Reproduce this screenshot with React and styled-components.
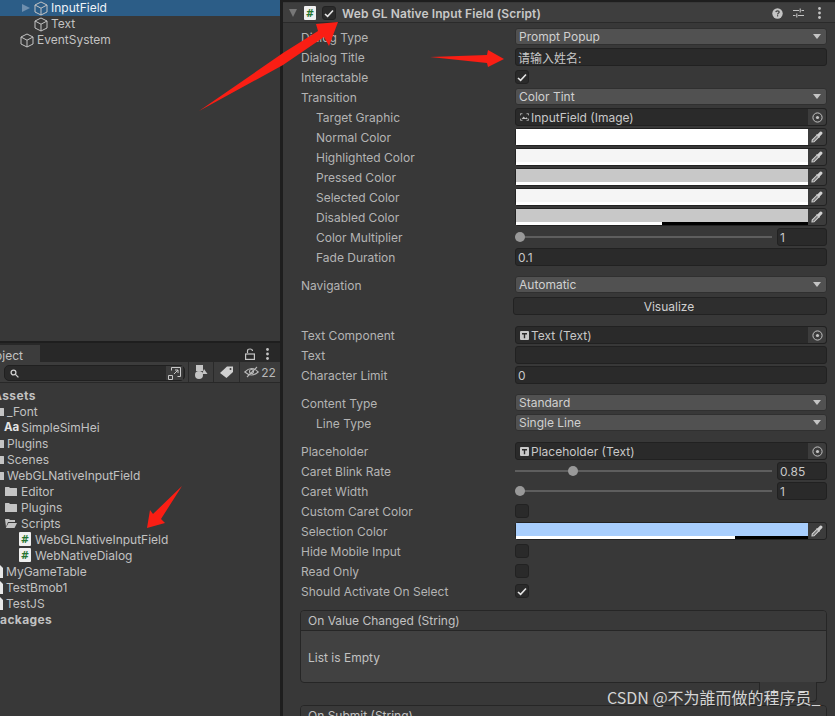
import React from 'react'
import styled, { createGlobalStyle } from 'styled-components'

const GlobalStyle = createGlobalStyle`
    html, body {
        margin: 0;
        padding: 0;
        background: #383838;
    }
    * {
        box-sizing: border-box;
    }
`

const Page = styled.div`
    position: relative;
    display: flex;
    width: 835px;
    height: 716px;
    overflow: hidden;
    background: #383838;
    color: #c2c2c2;
    font-family: Inter, "Noto Sans CJK SC", sans-serif;
    font-size: 12px;
`

const LeftColumn = styled.div`
    display: flex;
    flex-direction: column;
    flex: 0 0 280px;
    overflow: hidden;
`

const Hierarchy = styled.div`
    flex: 0 0 343px;
    border-bottom: 2px solid #1e1e1e;
`

const HierarchyRow = styled.div`
    display: flex;
    align-items: center;
    height: 16px;
    padding-left: ${(props) => props.$indent}px;
    background: ${(props) => (props.$selected ? '#2c5d87' : 'transparent')};
    color: ${(props) => (props.$selected ? '#eef3f7' : '#c2c2c2')};
`

const Caret = styled.span`
    width: 0;
    height: 0;
    margin-right: 4px;
    border-top: 4px solid transparent;
    border-bottom: 4px solid transparent;
    border-left: 8px solid #6f8fae;
`

const RowLabel = styled.span`
    margin-left: 3px;
    line-height: 16px;
    white-space: nowrap;
`

const Project = styled.div`
    flex: 1;
    display: flex;
    flex-direction: column;
    min-height: 0;
`

const TabBar = styled.div`
    display: flex;
    align-items: flex-end;
    justify-content: space-between;
    height: 19px;
    background: #282828;
`

const Tab = styled.div`
    display: flex;
    justify-content: flex-end;
    align-items: center;
    width: 40px;
    height: 17px;
    padding: 3px 17px 0 0;
    background: #3c3c3c;
    white-space: nowrap;
    overflow: hidden;
`

const TabIcons = styled.div`
    display: flex;
    align-items: center;
    gap: 11px;
    height: 17px;
    padding-right: 11px;
`

const Toolbar = styled.div`
    display: flex;
    align-items: stretch;
    height: 21px;
    background: #3c3c3c;
    border-bottom: 1px solid #282828;
`

const SearchBox = styled.div`
    display: flex;
    align-items: center;
    justify-content: space-between;
    width: 181px;
    height: 16px;
    margin: 3px 3px 0 4px;
    padding: 0 1px 0 5px;
    background: #2a2a2a;
    border: 1px solid #202020;
    border-radius: 5px;
`

const SearchButton = styled.div`
    display: flex;
    align-items: center;
    justify-content: center;
    width: 17px;
    height: 14px;
    background: #3c3c3c;
`

const ToolButton = styled.div`
    display: flex;
    align-items: center;
    justify-content: center;
    gap: 2px;
    width: ${(props) => props.$width}px;
    border-left: 1px solid #2a2a2a;
    color: #b8b8b8;
    font-size: 12px;
`

const Tree = styled.div`
    padding-top: 4px;
`

const TreeRow = styled.div`
    display: flex;
    align-items: center;
    gap: ${(props) => props.$gap || 3}px;
    height: 16px;
    margin-left: ${(props) => props.$indent}px;
    white-space: nowrap;
`

const TreeTitle = styled(TreeRow)`
    font-weight: 700;
    letter-spacing: 0.4px;
`

const FontMark = styled.b`
    color: #e4e4e4;
    font-size: 11.5px;
`

const ScriptBadge = styled.span`
    display: flex;
    align-items: center;
    justify-content: center;
    flex: 0 0 ${(props) => props.$size}px;
    height: ${(props) => props.$size + 2}px;
    background: #f0f0f0;
    border-radius: 1px;
    color: #24742f;
    font-family: "DejaVu Sans", sans-serif;
    font-size: ${(props) => props.$size - 2}px;
    font-weight: 700;
`

const Divider = styled.div`
    flex: 0 0 3px;
    background: #1e1e1e;
`

const Inspector = styled.div`
    flex: 1;
    min-width: 0;
    padding-top: 2px;
    border-top: 2px solid #1e1e1e;
`

const InspectorHeader = styled.div`
    display: flex;
    align-items: center;
    height: 20px;
    margin-top: -1px;
    padding: 1px 0 0 6px;
    background: #3e3e3e;
    border-bottom: 1px solid #2a2a2a;
`

const HeaderCaret = styled.span`
    width: 0;
    height: 0;
    margin-right: 7px;
    border-left: 4px solid transparent;
    border-right: 4px solid transparent;
    border-top: 8px solid #777;
`

const HeaderCheck = styled.div`
    display: flex;
    align-items: center;
    justify-content: center;
    width: 14px;
    height: 14px;
    margin-left: 6px;
    background: #2a2a2a;
    border: 1px solid #222;
    border-radius: 3px;
`

const Title = styled.div`
    flex: 1;
    margin-left: 6px;
    color: #c8c8c8;
    font-weight: 600;
    letter-spacing: 0.1px;
    white-space: nowrap;
`

const HeaderIcons = styled.div`
    display: flex;
    align-items: center;
    gap: 10px;
    padding-right: 14px;

    svg:last-child {
        margin-left: 4px;
    }
`

const Fields = styled.div`
    padding: 4px 8px 0 18px;
`

const Row = styled.div`
    display: flex;
    align-items: center;
    height: 20px;
    margin-top: ${(props) => props.$gap || 0}px;
`

const Label = styled.div`
    flex: 0 0 214px;
    padding-left: ${(props) => (props.$nested ? 15 : 0)}px;
    color: #b4b4b4;
    white-space: nowrap;
`

const Value = styled.div`
    flex: 1;
    display: flex;
    align-items: center;
    gap: 5px;
    min-width: 0;
`

const Dropdown = styled.div`
    flex: 1;
    display: flex;
    align-items: center;
    justify-content: space-between;
    height: 17px;
    margin-top: -1px;
    padding: 0 5px 0 3px;
    background: #515151;
    border: 1px solid #303030;
    border-radius: 3px;
    color: #d0d0d0;
`

const DropCaret = styled.span`
    width: 0;
    height: 0;
    border-left: 4px solid transparent;
    border-right: 4px solid transparent;
    border-top: 5px solid #c4c4c4;
`

const TextField = styled.div`
    flex: ${(props) => (props.$fixed ? '0 0 50px' : '1')};
    display: flex;
    align-items: center;
    height: 18px;
    padding-left: 2px;
    background: #2a2a2a;
    border: 1px solid #212121;
    border-radius: 3px;
    color: #c8c8c8;
    white-space: nowrap;
`

const ObjectField = styled(TextField)`
    justify-content: space-between;
    gap: 2px;
    padding-right: 0;
`

const ObjectName = styled.span`
    flex: 1;
    display: flex;
    align-items: center;
    gap: 2px;
    padding-left: 2px;
`

const Picker = styled.span`
    display: flex;
    align-items: center;
    justify-content: center;
    width: 18px;
    height: 16px;
    background: #3c3c3c;
    border-radius: 0 3px 3px 0;
`

const CheckBox = styled.div`
    display: flex;
    align-items: center;
    justify-content: center;
    width: 14px;
    height: 14px;
    background: #2a2a2a;
    border: 1px solid #222;
    border-radius: 3px;
`

const ColorField = styled.div`
    flex: 1;
    display: flex;
    height: 18px;
    border: 1px solid #222;
    border-radius: 3px;
    background: #3c3c3c;
`

const Swatch = styled.div`
    flex: 1;
    display: flex;
    flex-direction: column;
    background: ${(props) => props.$color};
`

const AlphaBar = styled.div`
    height: 3px;
    margin-top: auto;
    background: #000;
`

const AlphaFill = styled.div`
    height: 100%;
    background: #fff;
`

const Dropper = styled.span`
    display: flex;
    align-items: center;
    justify-content: center;
    flex: 0 0 18px;
`

const SliderTrack = styled.div`
    position: relative;
    flex: 1;
    height: 2px;
    background: #5e5e5e;
`

const Knob = styled.span`
    position: absolute;
    top: -4px;
    width: 10px;
    height: 10px;
    border-radius: 50%;
    background: #999;
`

const VisualizeButton = styled.div`
    display: flex;
    align-items: center;
    justify-content: center;
    height: 18px;
    margin: 2px 0 0 212px;
    padding-right: 2px;
    background: #2e2e2e;
    border: 1px solid #222;
    border-radius: 3px;
    color: #d0d0d0;
`

const EventBox = styled.div`
    margin: ${(props) => props.$top}px 0 0 -1px;
    background: #414141;
    border: 1px solid #262626;
    border-radius: 4px;
`

const EventHeader = styled.div`
    display: flex;
    align-items: center;
    height: 20px;
    padding-left: 7px;
    background: #393939;
    border-bottom: 1px solid #262626;
    border-radius: 4px 4px 0 0;
`

const EventBody = styled.div`
    display: flex;
    align-items: center;
    height: 51px;
    padding: 2px 0 0 7px;
`

const EventFooter = styled.div`
    display: flex;
    align-items: center;
    justify-content: space-around;
    width: 58px;
    height: 20px;
    margin: -1px 10px 0 auto;
    border: 1px solid #262626;
    border-top: 0;
    border-radius: 0 0 4px 4px;
    background: #383838;
    color: #ddd;
`

const Overlay = styled.svg`
    position: absolute;
    left: 0;
    top: 0;
    pointer-events: none;
`

const Watermark = styled.div`
    position: absolute;
    left: 607px;
    top: 687px;
    color: #d4d4d4;
    font-family: "Noto Sans CJK SC", sans-serif;
    font-size: 16px;
    line-height: 20px;
    white-space: nowrap;
`

const Cube = () => (
    <svg width="14" height="15" viewBox="0 0 14 15" fill="none" stroke="#c4c4c4" strokeWidth="1">
        <path d="M7 1 L13 4 V11 L7 14 L1 11 V4 Z M1 4 L7 7.2 L13 4 M7 7.2 V14" />
    </svg>
)

const Folder = ({ open }) => (
    <svg width="12" height="11" viewBox="0 0 12 11" fill="#c4c4c4">
        {open
            ? <path d="M0 1 H4 L5 2 H10 V4 H3 L1 9 Z M3.5 5 H12 L9.5 10 H0.8 Z" />
            : <path d="M0 1.5 Q0 1 .5 1 H4 L5 2 H11.5 Q12 2 12 2.5 V10 H0 Z" />}
    </svg>
)

const DocIcon = () => (
    <svg width="9" height="13" viewBox="0 0 9 13" fill="#e8e8e8">
        <path d="M0 0 H6 L9 3 V13 H0 Z" />
    </svg>
)

const Check = () => (
    <svg width="10" height="9" viewBox="0 0 10 9" fill="none" stroke="#e4e4e4" strokeWidth="1.6">
        <path d="M1 5 L3.6 7.4 L9 1.5" />
    </svg>
)

const Target = () => (
    <svg width="11" height="11" viewBox="0 0 11 11" fill="none" stroke="#c4c4c4">
        <circle cx="5.5" cy="5.5" r="4.6" />
        <circle cx="5.5" cy="5.5" r="1.6" fill="#c4c4c4" stroke="none" />
    </svg>
)

const EyeDropper = () => (
    <svg width="12" height="12" viewBox="0 0 12 12" fill="none">
        <path d="M1 11 L1.2 9 L6 4.2 L7.8 6 L3 10.8 Z" fill="#777" stroke="#d0d0d0" strokeWidth="1.1" />
        <path d="M5 3 L6.6 3.2 L9 .8 Q10 0 11 1 Q12 2 11.2 3 L8.8 5.4 L9 7 Z" fill="#d0d0d0" />
    </svg>
)

const TextGlyph = () => (
    <svg width="9" height="9" viewBox="0 0 9 9">
        <rect width="9" height="9" rx="1" fill="#c8c8c8" />
        <path d="M2 2 H7 V3.4 H5.2 V7.2 H3.8 V3.4 H2 Z" fill="#2a2a2a" />
    </svg>
)

const ImageGlyph = () => (
    <svg width="9" height="8" viewBox="0 0 11 9" fill="none" stroke="#c4c4c4">
        <path d="M.5 2.5 V.5 H3 M8 .5 H10.5 V2.5 M10.5 6.5 V8.5 H8 M3 8.5 H.5 V6.5" />
        <path d="M2 7 L4.5 4 L6.5 6 L8 4.8 L9.5 7 Z" fill="#c4c4c4" stroke="none" />
    </svg>
)

const SearchIcon = () => (
    <svg width="9" height="9" viewBox="0 0 9 9" fill="none" stroke="#d0d0d0" strokeWidth="1.3">
        <circle cx="3.5" cy="3.5" r="2.4" />
        <path d="M5.4 5.4 L8.4 8.4" />
    </svg>
)

const BoxArrow = () => (
    <svg width="13" height="13" viewBox="0 0 13 13" fill="none" stroke="#c8c8c8">
        <path d="M3.5 3.5 V.5 H12.5 V9.5 H9.5 M.5 8.5 H4.5 V12.5 H.5 Z M6 7 L10 3 M7 3 H10 V6" />
    </svg>
)

const LockIcon = () => (
    <svg width="10" height="12" viewBox="0 0 10 12" fill="none" stroke="#c4c4c4" strokeWidth="1.2">
        <path d="M2.5 5 V3 Q2.5 1 5 1 Q7.5 1 7.5 3" />
        <rect x=".6" y="6" width="8.8" height="5.4" />
    </svg>
)

const MoreDots = () => (
    <svg width="3" height="12" viewBox="0 0 3 12" fill="#c4c4c4">
        <circle cx="1.5" cy="1.5" r="1.4" />
        <circle cx="1.5" cy="6" r="1.4" />
        <circle cx="1.5" cy="10.5" r="1.4" />
    </svg>
)

const ShapesIcon = () => (
    <svg width="14" height="14" viewBox="0 0 14 14" fill="#c4c4c4">
        <rect x="2" y="0" width="7" height="6" />
        <circle cx="5" cy="10" r="4" />
        <path d="M10 4 L13.5 9 H8 Z" />
    </svg>
)

const TagIcon = () => (
    <svg width="14" height="12" viewBox="0 0 14 12" fill="#d0d0d0">
        <path d="M0 7 L7 .5 H13 V6 L6.5 12 Z" />
        <circle cx="10.5" cy="3" r="1" fill="#3c3c3c" />
    </svg>
)

const EyeOffIcon = () => (
    <svg width="15" height="12" viewBox="0 0 15 12" fill="none" stroke="#b8b8b8" strokeWidth="1.1">
        <path d="M.8 6 Q7.5 -1 14.2 6 Q7.5 12 .8 6 Z M3 11 L13 1" />
        <circle cx="7.5" cy="5.5" r="2" />
    </svg>
)

const HelpIcon = () => (
    <svg width="11" height="11" viewBox="0 0 11 11">
        <circle cx="5.5" cy="5.5" r="5.2" fill="#c4c4c4" />
        <path d="M3.8 4.2 Q4 2.8 5.5 2.8 Q7.2 2.8 7.2 4.1 Q7.2 4.9 6.3 5.3 Q5.6 5.6 5.6 6.4" fill="none" stroke="#3e3e3e" strokeWidth="1.2" />
        <rect x="5" y="7.2" width="1.2" height="1.2" fill="#3e3e3e" />
    </svg>
)

const PresetIcon = () => (
    <svg width="11" height="10" viewBox="0 0 11 10" fill="none" stroke="#c4c4c4" strokeWidth="1.1">
        <path d="M0 2.5 H6 M8.5 2.5 H11 M7.2 .5 V4.5 M0 7.5 H2.5 M5 7.5 H11 M3.8 5.5 V9.5" />
    </svg>
)

const Alpha = ({ fill }) => (
    <AlphaBar>
        <AlphaFill style={{ width: `${fill}%` }} />
    </AlphaBar>
)

const ColorValue = ({ color, alpha }) => (
    <ColorField>
        <Swatch $color={color}>
            <Alpha fill={alpha} />
        </Swatch>
        <Dropper><EyeDropper /></Dropper>
    </ColorField>
)

const SliderValue = ({ at, text }) => (
    <>
        <SliderTrack>
            <Knob style={{ left: `${at}px` }} />
        </SliderTrack>
        <TextField $fixed>{text}</TextField>
    </>
)

const DropdownValue = ({ text }) => (
    <Dropdown>{text}<DropCaret /></Dropdown>
)

const ObjectValue = ({ icon, text }) => (
    <ObjectField>
        <ObjectName>{icon}{text}</ObjectName>
        <Picker><Target /></Picker>
    </ObjectField>
)

const Field = ({ label, nested, gap, children }) => (
    <Row $gap={gap}>
        <Label $nested={nested}>{label}</Label>
        <Value>{children}</Value>
    </Row>
)

export default () => {
    return (
        <Page>
            <GlobalStyle />
            <LeftColumn>
                <Hierarchy>
                    <HierarchyRow $indent={22} $selected><Caret /><Cube /><RowLabel>InputField</RowLabel></HierarchyRow>
                    <HierarchyRow $indent={34}><Cube /><RowLabel>Text</RowLabel></HierarchyRow>
                    <HierarchyRow $indent={20}><Cube /><RowLabel>EventSystem</RowLabel></HierarchyRow>
                </Hierarchy>
                <Project>
                    <TabBar>
                        <Tab>Project</Tab>
                        <TabIcons><LockIcon /><MoreDots /></TabIcons>
                    </TabBar>
                    <Toolbar>
                        <SearchBox>
                            <SearchIcon />
                            <SearchButton><BoxArrow /></SearchButton>
                        </SearchBox>
                        <ToolButton $width={25}><ShapesIcon /></ToolButton>
                        <ToolButton $width={26}><TagIcon /></ToolButton>
                        <ToolButton $width={41}><EyeOffIcon />22</ToolButton>
                    </Toolbar>
                    <Tree>
                        <TreeTitle $indent={-7}>Assets</TreeTitle>
                        <TreeRow $indent={-8}><Folder /><span>_Font</span></TreeRow>
                        <TreeRow $indent={4} $gap={2}><FontMark>Aa</FontMark><span>SimpleSimHei</span></TreeRow>
                        <TreeRow $indent={-8}><Folder /><span>Plugins</span></TreeRow>
                        <TreeRow $indent={-8}><Folder /><span>Scenes</span></TreeRow>
                        <TreeRow $indent={-8}><Folder /><span>WebGLNativeInputField</span></TreeRow>
                        <TreeRow $indent={5} $gap={4}><Folder /><span>Editor</span></TreeRow>
                        <TreeRow $indent={5} $gap={4}><Folder /><span>Plugins</span></TreeRow>
                        <TreeRow $indent={5} $gap={4}><Folder open /><span>Scripts</span></TreeRow>
                        <TreeRow $indent={19} $gap={4}><ScriptBadge $size={12}>#</ScriptBadge><span>WebGLNativeInputField</span></TreeRow>
                        <TreeRow $indent={19} $gap={4}><ScriptBadge $size={12}>#</ScriptBadge><span>WebNativeDialog</span></TreeRow>
                        <TreeRow $indent={-6}><DocIcon /><span>MyGameTable</span></TreeRow>
                        <TreeRow $indent={-6}><DocIcon /><span>TestBmob1</span></TreeRow>
                        <TreeRow $indent={-6}><DocIcon /><span>TestJS</span></TreeRow>
                        <TreeTitle $indent={-8}>Packages</TreeTitle>
                    </Tree>
                </Project>
            </LeftColumn>
            <Divider />
            <Inspector>
                <InspectorHeader>
                    <HeaderCaret />
                    <ScriptBadge $size={12}>#</ScriptBadge>
                    <HeaderCheck><Check /></HeaderCheck>
                    <Title>Web GL Native Input Field (Script)</Title>
                    <HeaderIcons><HelpIcon /><PresetIcon /><MoreDots /></HeaderIcons>
                </InspectorHeader>
                <Fields>
                    <Field label="Dialog Type"><DropdownValue text="Prompt Popup" /></Field>
                    <Field label="Dialog Title"><TextField>请输入姓名:</TextField></Field>
                    <Field label="Interactable"><CheckBox><Check /></CheckBox></Field>
                    <Field label="Transition"><DropdownValue text="Color Tint" /></Field>
                    <Field label="Target Graphic" nested><ObjectValue icon={<ImageGlyph />} text="InputField (Image)" /></Field>
                    <Field label="Normal Color" nested><ColorValue color="#ffffff" alpha={100} /></Field>
                    <Field label="Highlighted Color" nested><ColorValue color="#f5f5f5" alpha={100} /></Field>
                    <Field label="Pressed Color" nested><ColorValue color="#c8c8c8" alpha={100} /></Field>
                    <Field label="Selected Color" nested><ColorValue color="#f5f5f5" alpha={100} /></Field>
                    <Field label="Disabled Color" nested><ColorValue color="#c8c8c8" alpha={50} /></Field>
                    <Field label="Color Multiplier" nested><SliderValue at={0} text="1" /></Field>
                    <Field label="Fade Duration" nested><TextField>0.1</TextField></Field>
                    <Field label="Navigation" gap={8}><DropdownValue text="Automatic" /></Field>
                    <VisualizeButton>Visualize</VisualizeButton>
                    <Field label="Text Component" gap={10}><ObjectValue icon={<TextGlyph />} text="Text (Text)" /></Field>
                    <Field label="Text"><TextField /></Field>
                    <Field label="Character Limit"><TextField>0</TextField></Field>
                    <Field label="Content Type" gap={8}><DropdownValue text="Standard" /></Field>
                    <Field label="Line Type" nested><DropdownValue text="Single Line" /></Field>
                    <Field label="Placeholder" gap={8}><ObjectValue icon={<TextGlyph />} text="Placeholder (Text)" /></Field>
                    <Field label="Caret Blink Rate"><SliderValue at={53} text="0.85" /></Field>
                    <Field label="Caret Width"><SliderValue at={0} text="1" /></Field>
                    <Field label="Custom Caret Color"><CheckBox /></Field>
                    <Field label="Selection Color"><ColorValue color="#a8cefd" alpha={75} /></Field>
                    <Field label="Hide Mobile Input"><CheckBox /></Field>
                    <Field label="Read Only"><CheckBox /></Field>
                    <Field label="Should Activate On Select"><CheckBox><Check /></CheckBox></Field>
                    <EventBox $top={9}>
                        <EventHeader>On Value Changed (String)</EventHeader>
                        <EventBody>List is Empty</EventBody>
                    </EventBox>
                    <EventFooter><span>+</span><span>−</span></EventFooter>
                    <EventBox $top={3}>
                        <EventHeader>On Submit (String)</EventHeader>
                    </EventBox>
                </Fields>
            </Inspector>
            <Overlay width="835" height="716" viewBox="0 0 835 716">
                <polygon fill="#fa1e14" points="199,111 283,53 318,31 316,24 338,22 329,46 324,37 283,65" />
                <polygon fill="#fa1e14" points="430,57 487,55 488,50 504,59 488,67 487,63" />
                <polygon fill="#fa1e14" points="182,486 161,519 165,523 147,528 150,510 153,514" />
            </Overlay>
            <Watermark>CSDN @不为誰而做的程序员_</Watermark>
        </Page>
    )
}
